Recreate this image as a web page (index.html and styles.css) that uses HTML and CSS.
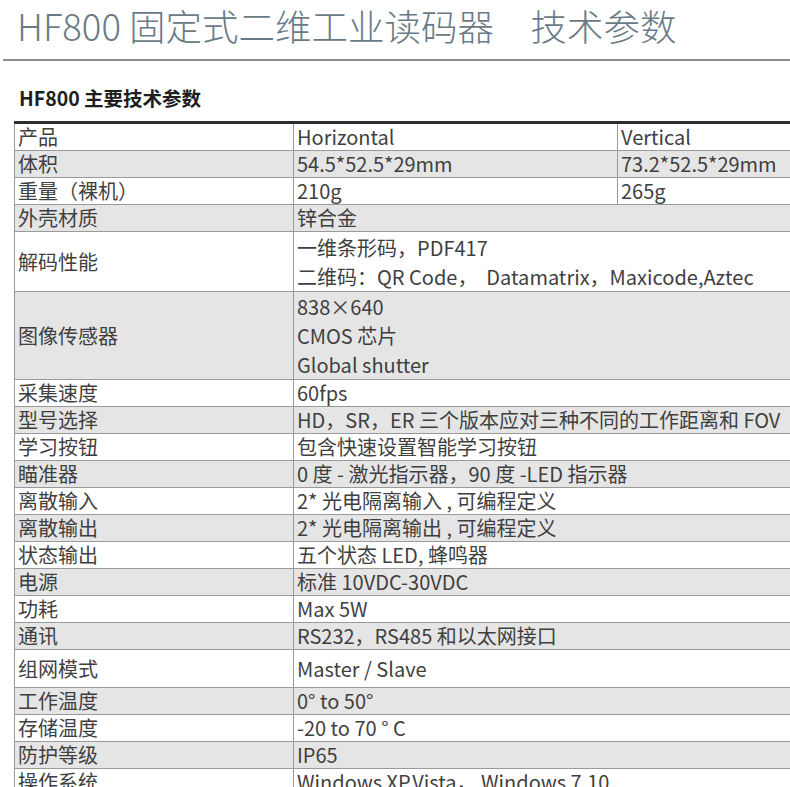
FILE: index.html
```html
<!DOCTYPE html>
<html lang="zh-CN">
<head>
<meta charset="utf-8">
<title>HF800 固定式二维工业读码器 技术参数</title>
<link rel="stylesheet" href="styles.css">
</head>
<body>
<header class="page-head">
  <h1 class="title">HF800 固定式二维工业读码器　技术参数</h1>
</header>
<h2 class="subtitle">HF800 主要技术参数</h2>
<div class="table-wrap">
<table class="spec">
  <colgroup>
    <col class="c1"><col class="c2"><col class="c3">
  </colgroup>
  <tbody>
    <tr><td>产品</td><td>Horizontal</td><td>Vertical</td></tr>
    <tr><td>体积</td><td>54.5*52.5*29mm</td><td>73.2*52.5*29mm</td></tr>
    <tr><td>重量（裸机）</td><td>210g</td><td>265g</td></tr>
    <tr><td>外壳材质</td><td colspan="2">锌合金</td></tr>
    <tr class="multi two"><td>解码性能</td><td colspan="2"><div class="ln">一维条形码，PDF417</div><div class="ln">二维码：QR Code，&nbsp;&nbsp;Datamatrix，Maxicode,Aztec</div></td></tr>
    <tr class="multi three"><td>图像传感器</td><td colspan="2"><div class="ln">838×640</div><div class="ln">CMOS 芯片</div><div class="ln">Global shutter</div></td></tr>
    <tr><td>采集速度</td><td colspan="2">60fps</td></tr>
    <tr><td>型号选择</td><td colspan="2">HD，SR，ER 三个版本应对三种不同的工作距离和 FOV</td></tr>
    <tr><td>学习按钮</td><td colspan="2">包含快速设置智能学习按钮</td></tr>
    <tr><td>瞄准器</td><td colspan="2">0 度 - 激光指示器，90 度 -LED 指示器</td></tr>
    <tr><td>离散输入</td><td colspan="2">2* 光电隔离输入 , 可编程定义</td></tr>
    <tr><td>离散输出</td><td colspan="2">2* 光电隔离输出 , 可编程定义</td></tr>
    <tr><td>状态输出</td><td colspan="2">五个状态 LED, 蜂鸣器</td></tr>
    <tr><td>电源</td><td colspan="2">标准 10VDC-30VDC</td></tr>
    <tr><td>功耗</td><td colspan="2">Max 5W</td></tr>
    <tr><td>通讯</td><td colspan="2">RS232，RS485 和以太网接口</td></tr>
    <tr class="tall"><td>组网模式</td><td colspan="2">Master / Slave</td></tr>
    <tr><td>工作温度</td><td colspan="2">0° to 50°</td></tr>
    <tr><td>存储温度</td><td colspan="2">-20 to 70 ° C</td></tr>
    <tr><td>防护等级</td><td colspan="2">IP65</td></tr>
    <tr><td>操作系统</td><td colspan="2">Windows XP,Vista，&nbsp;Windows 7,10</td></tr>
  </tbody>
</table>
</div>
</body>
</html>
```
FILE: styles.css
```css
html, body {
  margin: 0;
  padding: 0;
  overflow: hidden;
  background: #ffffff;
}
body {
  width: 790px;
  font-family: "Noto Sans CJK SC", "Noto Sans", sans-serif;
  color: #3f3f3f;
}
.page-head {
  margin-left: 3px;
  height: 59px;
  border-bottom: 2px solid #8c8c8c;
}
.title {
  margin: 0;
  padding-left: 14px;
  font-size: 36.5px;
  font-weight: 300;
  line-height: 52px;
  color: #6a7b87;
  white-space: nowrap;
}
.subtitle {
  margin: 23px 0 9px 19px;
  font-size: 19.5px;
  font-weight: 700;
  line-height: 28px;
  color: #1e1e1e;
}
.table-wrap {
  margin-left: 14px;
}
.spec {
  width: 790px;
  border-collapse: collapse;
  border-top: 3px solid #2e2e2e;
  table-layout: fixed;
}
.c1 { width: 279px; }
.c2 { width: 324px; }
.c3 { width: 187px; }
.spec td {
  height: 27px;
  padding: 0 3px;
  font-size: 20px;
  line-height: 26px;
  white-space: nowrap;
  vertical-align: middle;
  border: 1px solid #9a9a9a;
  border-right: none;
  box-sizing: border-box;
}
.spec td:first-child {
  border-left: 1px solid #9a9a9a;
}
.spec tr:nth-child(even) td {
  background: #e5e5e5;
}
.spec tr.two td { height: 60px; }
.spec tr.three td { height: 88px; }
.spec .ln { line-height: 29px; }
.spec tr.tall td { height: 38px; }
```
